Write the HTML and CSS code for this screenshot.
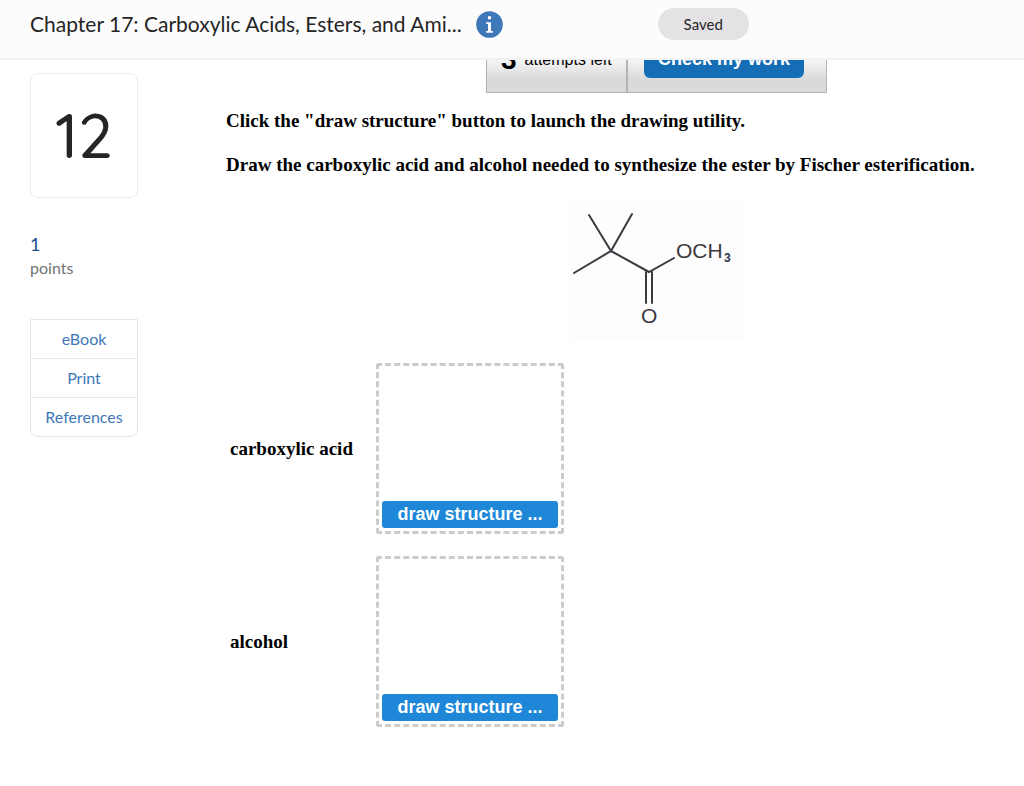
FILE: index.html
```
<!DOCTYPE html>
<html lang="en">
<head>
  <meta charset="UTF-8">
  <meta name="viewport" content="width=device-width, initial-scale=1.0">
  <title>Chapter 17: Carboxylic Acids, Esters, and Amides</title>
  <link rel="stylesheet" href="styles.css">
</head>
<body>
  <header class="topbar">
    <h1 class="title">Chapter 17: Carboxylic Acids, Esters, and Ami...</h1>
    <button class="info" type="button" aria-label="Assignment information">
      <svg width="27" height="27" viewBox="0 0 27 27">
        <circle cx="13.5" cy="13.5" r="13.3" fill="#3e78b8"/>
        <path fill="#fff" d="M12 5.2h3v3h-3zM10.2 11.2H15v8.8h1.8v1.8h-6.6V20H12v-7h-1.8z"/>
      </svg>
    </button>
    <span class="saved">Saved</span>
  </header>

  <main class="page">
    <aside class="sidebar">
      <div class="number">12</div>
      <div class="points"><span class="value">1</span>points</div>
      <nav class="links">
        <a href="#">eBook</a>
        <a href="#">Print</a>
        <a href="#">References</a>
      </nav>
    </aside>

    <section class="question">
      <!-- attempts bar, partly scrolled under the header -->
      <div class="scrolled">
        <div class="attempts">
          <div class="left"><b>3</b> attempts left</div>
          <div class="check"><button type="button">Check my work</button></div>
        </div>
      </div>

      <p>Click the "draw structure" button to launch the drawing utility.</p>
      <p>Draw the carboxylic acid and alcohol needed to synthesize the ester by Fischer esterification.</p>

      <svg class="molecule" width="176" height="142" viewBox="0 0 176 142" role="img" aria-label="Methyl 2,2-dimethylpropanoate">
        <rect width="176" height="142" fill="#fdfdfd"/>
        <g fill="none" stroke="#3c3a40" stroke-width="2" stroke-linecap="round">
          <path d="M19 17L41 53L62 16M4 75L41 53L79 74L104 60"/>
          <path d="M76 74V105M82 74V105"/>
        </g>
        <text class="atom" x="106" y="60">OCH</text>
        <text class="sub" x="154" y="64">3</text>
        <text class="atom" x="71" y="125">O</text>
      </svg>

      <div class="answers">
        <div class="answer">
          <span class="name" id="acid">carboxylic acid</span>
          <div class="canvas"><button type="button" aria-describedby="acid">draw structure ...</button></div>
        </div>
        <div class="answer">
          <span class="name" id="alcohol">alcohol</span>
          <div class="canvas"><button type="button" aria-describedby="alcohol">draw structure ...</button></div>
        </div>
      </div>
    </section>
  </main>
</body>
</html>
```
FILE: styles.css
```
* {
  box-sizing: border-box;
}
body {
  margin: 0;
  background: #fff;
  color: #252525;
  font-family: Lato, sans-serif;
}
button {
  border: none;
  padding: 0;
  cursor: pointer;
}
.topbar {
  display: flex;
  align-items: center;
  height: 60px;
  padding: 0 30px 10px;
  background: #fcfcfc;
  border-bottom: 2px solid #f2f2f2;
}
.title {
  margin: 0;
  font-size: 21px;
  font-weight: 400;
  line-height: 24px;
  white-space: nowrap;
}
.info {
  display: flex;
  margin-left: 14px;
  background: none;
}
.saved {
  margin-left: 155px;
  padding: 0 26px;
  border-radius: 16px;
  background: #e4e2e5;
  font-size: 15px;
  line-height: 32px;
}
.page {
  display: flex;
  gap: 88px;
  padding-left: 30px;
}
.sidebar {
  flex: 0 0 108px;
  padding-top: 13px;
}
.number {
  border: 1px solid #ececec;
  border-radius: 8px;
  font-family: Quicksand, Lato, sans-serif;
  font-size: 62px;
  font-weight: 500;
  line-height: 123px;
  text-align: center;
}
.points {
  margin-top: 34px;
  color: #737373;
  font-size: 16px;
  line-height: 24px;
}
.points .value {
  display: block;
  color: #1a4c8b;
  font-size: 18px;
}
.links {
  margin-top: 39px;
  border: 1px solid #e6e6e6;
  border-radius: 0 0 8px 8px;
  font-size: 16px;
  line-height: 38px;
  text-align: center;
}
.links a {
  display: block;
  color: #3e78b8;
  text-decoration: none;
}
.links a + a {
  border-top: 1px solid #e6e6e6;
}
.question {
  flex: 1;
  color: #000;
  font-family: "Liberation Serif", serif;
  font-size: 19px;
  font-weight: bold;
}
.question p {
  margin: 0 0 22px;
  line-height: 22px;
  white-space: nowrap;
}
.scrolled {
  display: flex;
  align-items: flex-end;
  height: 33px;
  margin: 0 0 17px 260px;
  overflow: hidden;
}
.attempts {
  display: flex;
  width: 341px;
  height: 67px;
  border: 1px solid #b4b4b4;
  background: linear-gradient(#fff, #fff 40%, #dadada 80%);
  font-family: "Liberation Sans", sans-serif;
  font-size: 16px;
  font-weight: 400;
}
.attempts .left {
  display: flex;
  align-items: center;
  gap: 8px;
  width: 141px;
  padding-left: 14px;
  border-right: 2px solid #b4b4b4;
}
.attempts b {
  font-size: 28px;
}
.attempts .check {
  display: flex;
  align-items: center;
  padding-left: 16px;
}
.attempts button {
  width: 160px;
  height: 36px;
  border-radius: 6px;
  background: #156eb5;
  color: #fff;
  font: bold 18px "Liberation Sans", sans-serif;
}
.molecule {
  display: block;
  margin-left: 344px;
}
.atom {
  fill: #3c3a40;
  font: 400 21px "Liberation Sans", sans-serif;
}
.sub {
  fill: #2b3550;
  font: bold 12px "Liberation Sans", sans-serif;
}
.answers {
  display: flex;
  flex-direction: column;
  gap: 22px;
  margin: 23px 0 0 4px;
}
.answer {
  display: flex;
  align-items: center;
}
.name {
  width: 146px;
}
.canvas {
  display: flex;
  align-items: flex-end;
  width: 188px;
  height: 171px;
  padding: 3px;
  border: 3px dashed #ccc;
  border-radius: 3px;
}
.canvas button {
  flex: 1;
  border-radius: 3px;
  background: #1e87d8;
  color: #fff;
  font: bold 18px/27px "Liberation Sans", sans-serif;
}
```
